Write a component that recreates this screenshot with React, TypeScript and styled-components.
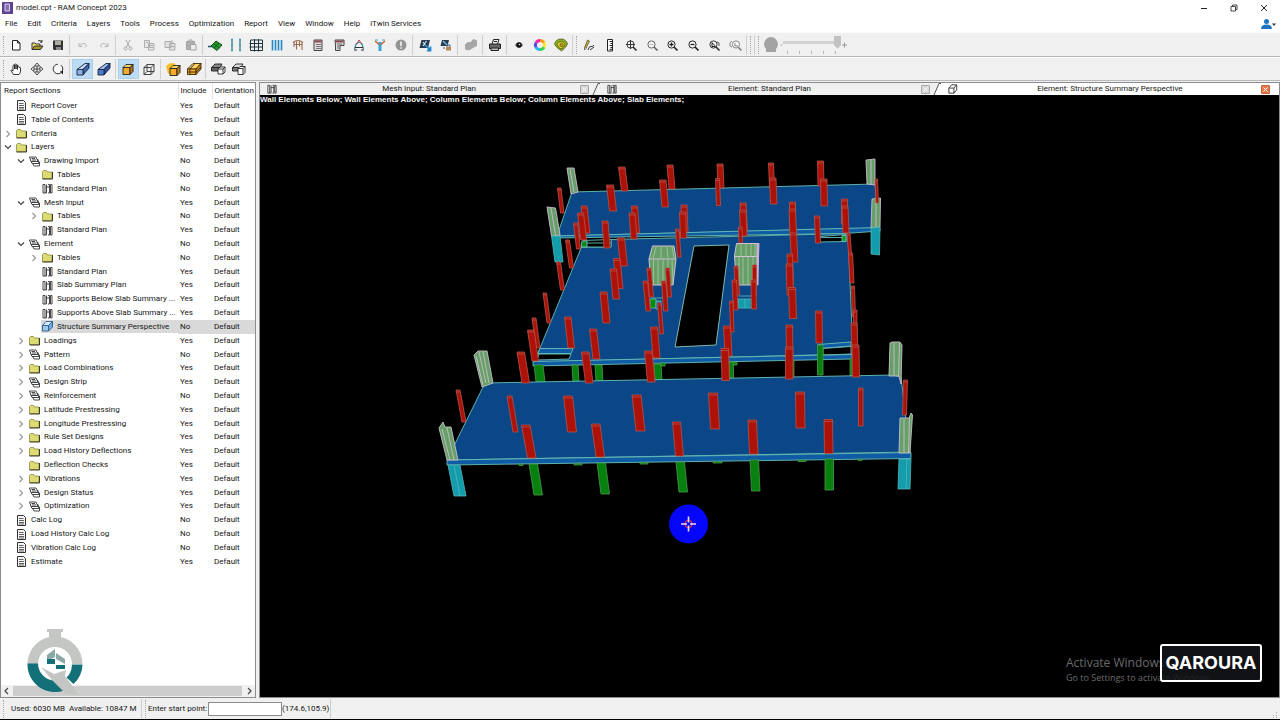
import React from "react";
import styled, { createGlobalStyle, css } from "styled-components";

const GlobalStyle = createGlobalStyle`
  * { box-sizing: border-box; }
  body {
    margin: 0;
    background: #000;
    color: #161616;
    font-family: Roboto, "Open Sans", sans-serif;
    font-size: 8px;
    line-height: 12px;
  }
  button, input { font: inherit; color: inherit; }
`;

const Page = styled.div`
  display: flex;
  flex-direction: column;
  min-height: 100vh;
  background: #f0f0f0;
  border-bottom: 1px solid #000;
`;

const TitleBar = styled.header`
  display: flex;
  align-items: center;
  height: 16px;
  padding: 0 6px 0 2px;
  gap: 3px;
  background: #fff;
`;

const Title = styled.h1`
  flex: 1;
  margin: 0;
  font-size: 8px;
  font-weight: 400;
`;

const WindowButton = styled.button`
  display: flex;
  justify-content: center;
  align-items: center;
  width: 20px;
  height: 14px;
  margin-left: 7px;
  padding: 0;
  border: 0;
  background: none;
`;

const MenuBar = styled.nav`
  display: flex;
  align-items: center;
  gap: 10px;
  height: 16px;
  padding: 0 4px 0 5px;
  background: #fff;
`;

const MenuItem = styled.button`
  padding: 0;
  border: 0;
  background: none;
  white-space: nowrap;
`;

const UserButton = styled(MenuItem)`
  display: flex;
  margin-left: auto;
`;

const Toolbar = styled.div<{ $height: number }>`
  display: flex;
  align-items: center;
  height: ${(p) => p.$height}px;
  padding-left: 2px;
  border-top: 1px solid #fafafa;
  border-bottom: 1px solid #b8b8b8;
`;

const ToolGroup = styled.div<{ $width: number }>`
  display: flex;
  width: ${(p) => p.$width}px;
`;

const ToolButton = styled.button<{ $active?: boolean }>`
  display: flex;
  flex: 1;
  justify-content: center;
  align-items: center;
  height: 20px;
  padding: 0;
  border: 0;
  background: none;
  ${(p) =>
    p.$active &&
    css`
      background: #bcdcf4;
      box-shadow: inset 0 0 0 1px #a9d0ee;
    `}
`;

const Separator = styled.span`
  width: 4px;
  height: 20px;
  border-right: 2px solid #f0f0f0;
  background: linear-gradient(#cfcfcf, #cfcfcf) right / 1px 100% no-repeat;
`;

const Grip = styled.span`
  width: 2px;
  height: 18px;
  margin: 0 1px;
  border-left: 1px dotted #a8a8a8;
`;

const Slider = styled.input`
  appearance: none;
  width: 58px;
  height: 18px;
  margin: 0;
  background:
    linear-gradient(#d2d2d2, #d2d2d2) 0 5px / 100% 3px no-repeat,
    repeating-linear-gradient(90deg, transparent 0 4px, #b5b5b5 4px 5px, transparent 5px 12px) 0 15px / 100% 3px no-repeat;
  &::-webkit-slider-thumb {
    appearance: none;
    width: 7px;
    height: 13px;
    margin-top: -5px;
    background: #c2c2c2;
    clip-path: polygon(0 0, 100% 0, 100% 75%, 50% 100%, 0 75%);
  }
`;

const Main = styled.main`
  display: flex;
  flex: 1;
  padding-top: 1px;
`;

const Sidebar = styled.aside`
  position: relative;
  display: flex;
  flex-direction: column;
  width: 256px;
  flex: none;
  border: 1px solid #8a8c92;
  background: #fff;
`;

const TreeTable = styled.table`
  width: 100%;
  height: 486px;
  table-layout: fixed;
  border-collapse: collapse;
  th, td {
    padding: 0;
    text-align: left;
    font-weight: 400;
    white-space: nowrap;
  }
  thead tr { height: 16px; }
  th:first-child { padding-left: 3px; }
  th + th { border-left: 1px solid #e4e4e4; }
  th + th, td + td { padding-left: 2px; }
`;

const TreeRow = styled.tr<{ $selected?: boolean }>`
  ${(p) =>
    p.$selected &&
    css`
      td + td, td span { background: #d9d9d9; }
    `}
`;

const TreeCell = styled.div<{ $level: number }>`
  display: flex;
  align-items: center;
  height: 13px;
  padding-left: ${(p) => p.$level * 13}px;
`;

const Chevron = styled.button`
  display: flex;
  justify-content: center;
  align-items: center;
  flex: none;
  width: 13px;
  height: 12px;
  padding: 0;
  border: 0;
  background: none;
`;

const TreeLabel = styled.span`
  display: flex;
  align-items: center;
  flex: 1;
  gap: 3px;
  height: 13px;
  margin-left: 1px;
`;

const HScroll = styled.div`
  display: flex;
  align-items: center;
  height: 12px;
  margin-top: auto;
  background: #f0f0f0;
`;

const ScrollArrow = styled(Chevron)`
  width: 12px;
`;

const ScrollThumb = styled.div`
  flex: 1;
  height: 10px;
  margin-right: 1px;
  background: #cdcdcd;
`;

const BrandMark = styled.svg`
  position: absolute;
  left: 24px;
  bottom: 1px;
`;

const Workspace = styled.section`
  display: flex;
  flex: 1;
  flex-direction: column;
  min-width: 0;
  margin-left: 3px;
  border: 1px solid #8a8c92;
`;

const Tabs = styled.div`
  display: flex;
  height: 12px;
  background: #f0f0f0;
`;

const Tab = styled.div<{ $active?: boolean }>`
  display: flex;
  align-items: center;
  flex: ${(p) => (p.$active ? "1" : "0 0 33.4%")};
  height: 12px;
  padding-left: 6px;
  background: ${(p) => (p.$active ? "#fff" : "#f0f0f0")};
`;

const TabTitle = styled.button`
  display: flex;
  align-items: center;
  flex: 1;
  height: 12px;
  padding: 0;
  border: 0;
  background: none;
`;

const TabText = styled.span`
  flex: 1;
  text-align: center;
`;

const TabClose = styled.button<{ $active?: boolean }>`
  display: flex;
  justify-content: center;
  align-items: center;
  width: 9px;
  height: 9px;
  margin-right: ${(p) => (p.$active ? 9 : 1)}px;
  padding: 0;
  border: 1px solid ${(p) => (p.$active ? "#c8643c" : "#a8a8a8")};
  border-radius: 1px;
  background: ${(p) => (p.$active ? "#e87a4a" : "#d8d8d8")};
`;

const Canvas = styled.div`
  position: relative;
  flex: 1;
  background: #000;
  color: #f4f4f4;
`;

const VisibleItems = styled.p`
  height: 9px;
  margin: 0;
  font: 700 8px/9px "Liberation Sans", Arial, sans-serif;
`;

const Scene = styled.svg`
  display: block;
  width: 100%;
`;

const Watermark = styled.div`
  position: absolute;
  right: 53px;
  bottom: 12px;
  width: 160px;
  color: #6c6c6c;
  font: 9px/14px "Open Sans", sans-serif;
  white-space: nowrap;
  strong {
    display: block;
    font-size: 12px;
    font-weight: 400;
    line-height: 17px;
  }
`;

const Badge = styled.div`
  position: absolute;
  right: 17px;
  bottom: 15px;
  display: flex;
  justify-content: center;
  align-items: center;
  width: 102px;
  height: 38px;
  border: 2px solid #fff;
  border-radius: 3px;
  background: rgba(20, 21, 25, 0.86);
  color: #fff;
  font: 700 18px/20px Inter, sans-serif;
`;

const StatusBar = styled.footer`
  display: flex;
  align-items: center;
  height: 21px;
  padding: 0 1px 0 2px;
  white-space: pre;
`;

const StatusText = styled.span<{ $width?: number }>`
  width: ${(p) => (p.$width ? p.$width + "px" : "auto")};
  padding-left: 5px;
`;

const StatusLabel = styled.label`
  display: flex;
  align-items: center;
  gap: 1px;
`;

const PointInput = styled.input`
  width: 74px;
  height: 14px;
  padding: 0 2px;
  border: 1px solid #8c8c8c;
  background: #fff;
`;

const ResizeGrip = styled.svg`
  align-self: flex-end;
  margin-left: auto;
`;

/* ---------- toolbar icons, drawn on a 16 unit grid ---------- */

const lens = (color: string) => (
  <g fill="none" stroke={color}>
    <circle cx="7.5" cy="7.5" r="3.6" fill="#f8f8f8" />
    <path d="M10 10l3.500 3.500" strokeWidth="1.700" />
  </g>
);
const box3d = (front: string, side: string, top: string) => (
  <g stroke="#222" strokeWidth=".9" strokeLinejoin="round">
    <path d="M3 6.500h7v7H3z" fill={front} />
    <path d="M3 6.500L6 3.500h7l-3 3z" fill={top} />
    <path d="M10 6.500L13 3.500v7l-3 3z" fill={side} />
  </g>
);
const beam = (front: string, side: string, top: string) => (
  <g stroke="#14213c" strokeWidth=".9" strokeLinejoin="round">
    <path d="M2 8.500L10 2.500h4l-6 6z" fill={top} />
    <path d="M8 8.500l6-6v4.500l-6 7z" fill={side} />
    <path d="M2 8.500h6V14H2z" fill={front} />
  </g>
);

const icons: Record<string, React.ReactNode> = {
  new: <path d="M4.500 3.500h5l2.500 2.500v7h-7.500zM9.500 3.500V6H12" fill="#fff" stroke="#222" />,
  open: (
    <g stroke="#222" strokeWidth=".9">
      <path d="M3 12V6h3l1 1h4v2" fill="#f4e27a" />
      <path d="M3 12.500L5.500 9H14l-2.500 3.500z" fill="#a8962e" />
      <path d="M9 4q2-1.500 4 .8M13 3v2.200h-2" fill="none" />
    </g>
  ),
  save: (
    <g>
      <path d="M3 3.500h10v9.500H4L3 12z" fill="#333" />
      <path d="M5 4h6v4H5z" fill="#a9ada0" />
      <path d="M6 10h5v3H6z" fill="#8a8a8a" />
    </g>
  ),
  undo: <path d="M4 6v3.500h3.500M4.500 9Q8 5 11 7.500q1 2-1 3" fill="none" stroke="#b4b4b4" />,
  redo: <path d="M12 6v3.500H8.500M11.500 9Q8 5 5 7.500q-1 2 1 3" fill="none" stroke="#b4b4b4" />,
  cut: (
    <g fill="none" stroke="#a9a9a9">
      <path d="M6 3l3.500 7M10 3L6.500 10" />
      <circle cx="5.500" cy="11.500" r="1.500" />
      <circle cx="10.500" cy="11.500" r="1.500" />
    </g>
  ),
  copy: (
    <g fill="#e8e8e8" stroke="#adadad">
      <path d="M3.500 3.500h5v7h-5zM7.500 6.500h5.500v6.500H7.500z" />
      <path d="M9 8.500h3M9 10.500h3M5 5.500h2" />
    </g>
  ),
  copyTo: (
    <g fill="#e0e0e0" stroke="#adadad">
      <path d="M3 4.500h6v6H3zM7.500 6.500H13v6.500H7.500z" />
      <path d="M10 3v4M8.500 5.500L10 7l1.500-1.500M9 9.500h3" />
    </g>
  ),
  paste: (
    <g stroke="#a2a2a2">
      <path d="M3.500 4.500h8v8h-8z" fill="#b0b0b0" />
      <path d="M6 3h3v2H6z" fill="#ddd" />
      <path d="M7.500 7.500h5.500v5.500H7.500z" fill="#eee" />
    </g>
  ),
  mesh: (
    <g>
      <path d="M1 9.500h6" stroke="#174e78" strokeWidth="1.500" />
      <path d="M4 9l5-5 6 4-5 5.500z" fill="#24962c" stroke="#0d5417" />
      <path d="M6.500 6.500l6 4.500M11.500 6L7 11" stroke="#0d5417" strokeWidth=".8" />
    </g>
  ),
  strips: (
    <g>
      <path d="M4 3v10.500M12 3v10.500" stroke="#2b6f7d" strokeWidth="1.200" />
      <path d="M3 2.500h2M3 8h2M3 13.500h2M11 2.500h2M11 8h2M11 13.500h2" stroke="#37a0ab" strokeWidth="1.500" />
    </g>
  ),
  grid: <path d="M2.500 3h12v10.500h-12zM6.500 2v12.500M10.500 2v12.500M1.500 6.500h13.500M1.500 10h13.500" fill="none" stroke="#1d3540" />,
  bars: <path d="M3.500 3v10.500M6.500 3v10.500M9.500 3v10.500M12.500 3v10.500" stroke="#2388c4" strokeWidth="1.600" />,
  frame: <path d="M3 5.500q5-4 10 0M4 5v5M6.500 4.500v8M9.500 4.500v5M12 5v8M4 7.500h8" fill="none" stroke="#9a6b4c" strokeWidth="1.100" />,
  calc: (
    <g>
      <path d="M4 3h8v10.500H4z" fill="#ddd" stroke="#444" />
      <path d="M4.500 3.500h7v2h-7z" fill="#8f4a52" />
      <path d="M6 7.500h5M6 9.500h5M6 11.500h5" stroke="#777" />
    </g>
  ),
  sheet: (
    <g>
      <path d="M4 3h9v5.500H9v5H4.500V8z" fill="#ddd" stroke="#444" />
      <path d="M4.500 3.500h8v2h-8z" fill="#8f4a52" />
      <path d="M6 7h5M6 9h2.500M6 11h2.500" stroke="#666" />
    </g>
  ),
  arch: (
    <g fill="none">
      <path d="M3.500 12l1.500-5q3.500-3 6 0l1.500 5" stroke="#3887ab" strokeWidth="1.200" />
      <path d="M8 3L5.500 7.500M8 3l3 4.500" stroke="#b34646" />
      <path d="M3 13h3M10 13h3M4 10.500h8" stroke="#333" />
    </g>
  ),
  tee: (
    <g fill="none">
      <path d="M8 5v9" stroke="#35a5d5" strokeWidth="3" />
      <path d="M3 4l4 3.500M13 4L9 7.500" stroke="#cf5730" strokeWidth="1.300" />
      <path d="M3 3h3M10 3h3" stroke="#48a4cf" />
    </g>
  ),
  info: (
    <g>
      <circle cx="8" cy="8" r="5.500" fill="#949494" />
      <path d="M8 4.500v4.500M8 10.300v1.500" stroke="#eee" strokeWidth="1.700" />
    </g>
  ),
  sync: (
    <g>
      <path d="M4.500 3h8.500l-2 8H2.500z" fill="#273b4e" />
      <path d="M6 5l3 4M9.500 4L6 9" stroke="#d6e8f2" strokeWidth="1.200" />
      <path d="M8 8l5.500 5M13.500 9.500V13.500H10" fill="none" stroke="#2487c7" strokeWidth="1.800" />
    </g>
  ),
  syncLock: (
    <g>
      <path d="M4 3h7l-1.500 6H2.500z" fill="#273b4e" />
      <path d="M5 4l4 4" stroke="#7ebde5" strokeWidth="1.300" />
      <path d="M8 9.500h5v4H8z" fill="#bd8659" />
      <path d="M9 9.500V8h3v1.500M5 11h2" fill="none" stroke="#315e82" />
    </g>
  ),
  solids: <path d="M2 7.500l3-2.500h3l1-2 2-1 3 1.500v5.500l-4 2-4 2.500-4-1z" fill="#a6a6a6" />,
  print: (
    <g stroke="#222">
      <path d="M5 7l1.500-4.500H12L10.500 7" fill="#eee" />
      <path d="M2.500 7h11v4.500h-11z" fill="#666" />
      <path d="M4 11h7.500v2.500H4zM7 4.500h3" fill="#bbb" />
    </g>
  ),
  eye: (
    <g>
      <path d="M3.500 8q4.500-5.500 9 0-4.500 5.500-9 0z" fill="#999" />
      <circle cx="8" cy="8" r="2.800" fill="#111" />
      <circle cx="8.500" cy="7.500" r=".8" fill="#eee" />
    </g>
  ),
  wheel: (
    <g fill="none" strokeWidth="3">
      <path d="M8 3.400A4.600 4.600 0 0 1 12 5.700" stroke="#ff9c12" />
      <path d="M12 5.700A4.600 4.600 0 0 1 12 10.300" stroke="#ffe526" />
      <path d="M12 10.300A4.600 4.600 0 0 1 8 12.600" stroke="#3bd452" />
      <path d="M8 12.600A4.600 4.600 0 0 1 4 10.300" stroke="#22b9ec" />
      <path d="M4 10.300A4.600 4.600 0 0 1 4 5.700" stroke="#4b47ee" />
      <path d="M4 5.700A4.600 4.600 0 0 1 8 3.400" stroke="#f024a8" />
    </g>
  ),
  contour: (
    <g stroke="#4c5a12" strokeWidth=".8">
      <path d="M1.500 7q1.500-5 6.500-5t6.500 5q-1 3-6 7-6-4-7-7z" fill="#8fae2c" />
      <path d="M4 7.500Q5 4.500 8 4.500t4 3q-1 3-4 4.500-3-2-4-4.500z" fill="#e6d32c" />
      <circle cx="8.500" cy="8" r="1.600" fill="#d69121" />
    </g>
  ),
  pencil: (
    <g>
      <path d="M4 11L7.500 3.500" stroke="#c7b42d" strokeWidth="2" />
      <path d="M6.500 3L3.500 11v2l1.500-1.500L8.500 4z" fill="none" stroke="#444" strokeWidth=".7" />
      <path d="M7 13q1-4 3-3.500t3-1.500M9 13l4-3" fill="none" stroke="#333" />
    </g>
  ),
  ruler: (
    <g>
      <path d="M5.500 2.500h5v11.500h-5z" fill="#fff" stroke="#222" />
      <path d="M7.500 4.500H10M8.500 6.500H10M7.500 8.500H10M8.500 10.500H10M7.500 12.300H10" stroke="#222" />
    </g>
  ),
  zoomExtents: <g>{lens("#333")}<path d="M3 7.500h9M7.500 3v9" stroke="#333" /></g>,
  zoomWindow: <g>{lens("#666")}<path d="M5.500 7.500h4" stroke="#bbb" /></g>,
  zoomIn: <g>{lens("#222")}<path d="M5.500 7.500h4M7.500 5.500v4" stroke="#222" strokeWidth="1.300" /></g>,
  zoomOut: <g>{lens("#222")}<path d="M5.500 7.500h4" stroke="#222" strokeWidth="1.300" /></g>,
  zoomPrev: <g>{lens("#333")}<path d="M6 5.500v4h3.500M9.500 9L6 6" stroke="#222" fill="none" /><path d="M11 5q3 0 2 4" stroke="#555" fill="none" /></g>,
  zoomNext: <g><circle cx="9" cy="7.500" r="3.600" fill="#f8f8f8" stroke="#888" /><path d="M11.500 10.500l3 3" stroke="#777" strokeWidth="1.500" /><path d="M5 4Q2 5 3 9l2 1M8 6v3h3" fill="none" stroke="#888" /></g>,
  hand: <path d="M5.500 13.500L3 9.500q0-1.500 2 .500V4.500q1-1 1.500 0V8 3.500q1-1 1.500 0V8 4q1-1 1.500 0v4.500-3q1-.8 1.500 0V6.500q1.500-.5 1.500.5v3q0 2-1.500 3.500z" fill="#fff" stroke="#222" strokeWidth=".9" />,
  pan: (
    <g fill="#fff" stroke="#333" strokeWidth=".9">
      <path d="M8 2l2.500 3H5.500zM8 14l2.500-3H5.500zM2 8l3-2.500v5zM14 8l-3-2.500v5z" />
      <path d="M8 5v6M5 8h6" />
    </g>
  ),
  rotate: <g><circle cx="8" cy="8" r="4.800" fill="#f8f8f8" stroke="#333" strokeDasharray="22 3" /><path d="M10 10.500l3 3v-4z" fill="#222" /></g>,
  beam: beam("#8fb0e4", "#3f66b0", "#c3d6f2"),
  beam2: beam("#4d7ccf", "#2b4f9c", "#9dbbea"),
  boxSolid: box3d("#f5aa2c", "#b8761a", "#ffd27a"),
  boxWire: (
    <g fill="none" stroke="#333" strokeWidth=".9">
      <path d="M3 6.500h7v7H3zM6 3.500h7v7H6zM3 6.500L6 3.500M10 6.500L13 3.500M10 13.500l3-3M3 13.500L6 10.500" />
    </g>
  ),
  boxGlow: <g><path d="M1 5l4-3 5 .5 1 3-4 7H3z" fill="#f6bd28" /><g transform="translate(2 1)">{box3d("#f5aa2c", "#c98316", "#ffd36a")}</g></g>,
  boxCut: (
    <g stroke="#3a2a08" strokeWidth=".9">
      <path d="M1.500 8L7 2.500h8L10 8z" fill="#ffd36a" />
      <path d="M1.500 8H10v5.500H1.500z" fill="#f5aa2c" />
      <path d="M10 8l5-5.500V8l-5 5.500z" fill="#c98316" />
      <path d="M4 13.500V8L9 2.500M1.500 11H10l5-5" fill="none" />
    </g>
  ),
  printBox: (
    <g stroke="#222" strokeWidth=".9">
      <path d="M1.500 6.500L5 3h7l-2 3.500z" fill="#888" />
      <path d="M1.500 6.500H10V10H1.500z" fill="#666" />
      <path d="M8 8h5v5H8zM8 8l2-2h5l-2 2M13 13l2-2V6" fill="#fff" />
    </g>
  ),
  printBox2: (
    <g stroke="#222" strokeWidth=".9">
      <path d="M1.500 6.500L5 3h7l-2 3.500z" fill="#ddd" />
      <path d="M1.500 6.500H10V10H1.500z" fill="#777" />
      <path d="M7 7.500h5v6H7zM7 7.500l2-2h5l-2 2M12 13.500l2-2v-6" fill="#fff" />
    </g>
  ),
};

const Glyph = ({ name }: { name: string }) => (
  <svg width="16" height="16" viewBox="0 0 16 16" aria-hidden="true">
    {icons[name]}
  </svg>
);

type Tool = [icon: string, label: string, active?: boolean];
type Group = { width: number; tools: Tool[] };

const mainGroups: Group[] = [
  { width: 62, tools: [["new", "New"], ["open", "Open"], ["save", "Save"]] },
  { width: 42, tools: [["undo", "Undo"], ["redo", "Redo"]] },
  { width: 83, tools: [["cut", "Cut"], ["copy", "Copy"], ["copyTo", "Copy to"], ["paste", "Paste"]] },
  {
    width: 206,
    tools: [
      ["mesh", "Generate mesh"], ["strips", "Generate strips"], ["grid", "Grid"], ["bars", "Reinforcement"], ["frame", "Tendons"],
      ["calc", "Calc all"], ["sheet", "Report"], ["arch", "Load balance"], ["tee", "Punch check"], ["info", "Errors"],
    ],
  },
  { width: 41, tools: [["sync", "Sync"], ["syncLock", "Sync lock"]] },
  { width: 21, tools: [["solids", "Solids"]] },
  { width: 20, tools: [["print", "Print"]] },
  { width: 62, tools: [["eye", "Visible objects"], ["wheel", "Colors"], ["contour", "Contours"]] },
];

const zoomGroup: Group = {
  width: 166,
  tools: [
    ["pencil", "Redraw"], ["ruler", "Scale"], ["zoomExtents", "Zoom extents"], ["zoomWindow", "Zoom window"],
    ["zoomIn", "Zoom in"], ["zoomOut", "Zoom out"], ["zoomPrev", "Previous zoom"], ["zoomNext", "Next zoom"],
  ],
};

const viewGroups: Group[] = [
  { width: 62, tools: [["hand", "Pan"], ["pan", "Move"], ["rotate", "Rotate"]] },
  { width: 42, tools: [["beam", "Perspective", true], ["beam2", "Parallel"]] },
  { width: 41, tools: [["boxSolid", "Solid", true], ["boxWire", "Wireframe"]] },
  { width: 41, tools: [["boxGlow", "Shaded"], ["boxCut", "Outlined"]] },
  { width: 41, tools: [["printBox", "Set print view"], ["printBox2", "Show print view"]] },
];

const Tools = ({ group }: { group: Group }) => (
  <ToolGroup $width={group.width}>
    {group.tools.map(([icon, label, active]) => (
      <ToolButton key={icon} $active={active} aria-label={label}>
        <Glyph name={icon} />
      </ToolButton>
    ))}
  </ToolGroup>
);

const Groups = ({ groups }: { groups: Group[] }) => (
  <>
    {groups.map((g, i) => (
      <React.Fragment key={i}>
        {i > 0 && <Separator />}
        <Tools group={g} />
      </React.Fragment>
    ))}
  </>
);

/* ---------- report tree ---------- */

const treeIcons: Record<string, React.ReactNode> = {
  doc: (
    <g>
      <path d="M2.500 1.500h6l2 2v8h-8z" fill="#f4f4f4" stroke="#333" />
      <path d="M4 4.500h4.500M4 6.500h5M4 8.500h5M4 10h5" stroke="#555" strokeWidth=".9" />
    </g>
  ),
  folder: (
    <g>
      <path d="M1.500 10.500v-7l1-1h3l1 1.500h4.500v6.500z" fill="#dddc74" stroke="#8b8840" strokeWidth=".8" />
      <path d="M1.500 11h10V4" fill="none" stroke="#3c3b20" />
    </g>
  ),
  layers: (
    <g fill="#fff" stroke="#333" strokeWidth=".9">
      <path d="M4 7h7.500v4H6z" />
      <path d="M2.500 4.500H10l1 4H4z" />
      <path d="M1.500 2H8l2 4.500H3z" />
      <path d="M3.500 3.500H7M4 5h4" />
    </g>
  ),
  plan: (
    <g fill="none" stroke="#333" strokeWidth=".9">
      <path d="M2 2.500h2v8.500H2zM5.500 2.500v8.500h-1.500M7 2.500h1.500V11H7M9.500 2.500h1.500V11H9.500zM5.500 5h3.500" />
    </g>
  ),
  cube: (
    <g stroke="#2a5d8c" strokeWidth=".9" strokeLinejoin="round">
      <path d="M1.500 5.500h6v5.500h-6z" fill="#9cc8ee" />
      <path d="M1.500 5.500L5 1.500h6.500l-4 4z" fill="#d6eafa" />
      <path d="M7.500 5.500l4-4V7l-4 4z" fill="#6fa9de" />
    </g>
  ),
};

type Row = [label: string, level: number, icon: string, state: "" | ">" | "v", include: "Yes" | "No"];

const rows: Row[] = [
  ["Report Cover", 0, "doc", "", "Yes"],
  ["Table of Contents", 0, "doc", "", "Yes"],
  ["Criteria", 0, "folder", ">", "Yes"],
  ["Layers", 0, "folder", "v", "Yes"],
  ["Drawing Import", 1, "layers", "v", "No"],
  ["Tables", 2, "folder", "", "No"],
  ["Standard Plan", 2, "plan", "", "No"],
  ["Mesh Input", 1, "layers", "v", "Yes"],
  ["Tables", 2, "folder", ">", "No"],
  ["Standard Plan", 2, "plan", "", "Yes"],
  ["Element", 1, "layers", "v", "No"],
  ["Tables", 2, "folder", ">", "No"],
  ["Standard Plan", 2, "plan", "", "Yes"],
  ["Slab Summary Plan", 2, "plan", "", "Yes"],
  ["Supports Below Slab Summary ...", 2, "plan", "", "Yes"],
  ["Supports Above Slab Summary ...", 2, "plan", "", "Yes"],
  ["Structure Summary Perspective", 2, "cube", "", "No"],
  ["Loadings", 1, "folder", ">", "Yes"],
  ["Pattern", 1, "layers", ">", "No"],
  ["Load Combinations", 1, "folder", ">", "Yes"],
  ["Design Strip", 1, "layers", ">", "Yes"],
  ["Reinforcement", 1, "layers", ">", "No"],
  ["Latitude Prestressing", 1, "folder", ">", "Yes"],
  ["Longitude Prestressing", 1, "folder", ">", "Yes"],
  ["Rule Set Designs", 1, "folder", ">", "Yes"],
  ["Load History Deflections", 1, "folder", ">", "Yes"],
  ["Deflection Checks", 1, "folder", "", "Yes"],
  ["Vibrations", 1, "folder", ">", "Yes"],
  ["Design Status", 1, "layers", ">", "Yes"],
  ["Optimization", 1, "layers", ">", "Yes"],
  ["Calc Log", 0, "doc", "", "No"],
  ["Load History Calc Log", 0, "doc", "", "No"],
  ["Vibration Calc Log", 0, "doc", "", "No"],
  ["Estimate", 0, "doc", "", "Yes"],
];

const Arrow = ({ d, color = "#444" }: { d: string; color?: string }) => (
  <svg width="8" height="8" viewBox="0 0 8 8" aria-hidden="true">
    <path d={d} fill="none" stroke={color} strokeWidth="1.200" />
  </svg>
);

const TreeIcon = ({ name }: { name: string }) => (
  <svg width="13" height="13" viewBox="0 0 13 13" aria-hidden="true">
    {treeIcons[name]}
  </svg>
);

const ReportTree = () => (
  <TreeTable>
    <colgroup>
      <col />
      <col width="34" />
      <col width="43" />
    </colgroup>
    <thead>
      <tr>
        <th>Report Sections</th>
        <th>Include</th>
        <th>Orientation</th>
      </tr>
    </thead>
    <tbody>
      {rows.map(([label, level, icon, state, include], i) => (
        <TreeRow key={i} $selected={icon === "cube"}>
          <td>
            <TreeCell $level={level}>
              <Chevron as={state ? "button" : "i"} aria-label={state ? "Toggle " + label : undefined}>
                {state === ">" && <Arrow d="M2.500 1l3 3-3 3" color="#999" />}
                {state === "v" && <Arrow d="M1 2.500l3 3 3-3" />}
              </Chevron>
              <TreeLabel>
                <TreeIcon name={icon} />
                {label}
              </TreeLabel>
            </TreeCell>
          </td>
          <td>{include}</td>
          <td>Default</td>
        </TreeRow>
      ))}
    </tbody>
  </TreeTable>
);

/* ---------- structure model ---------- */

/* x, y of the top left corner, width, lean to the right, height */
type Post = [number, number, number, number, number];

const post = ([x, y, w, dx, h]: Post) => `M${x} ${y}h${w}L${x + w + dx} ${y + h}h${-w}z`;
const caps = ([x, y, w]: Post) => `M${x} ${y + 2}h${w}`;

const backPosts: Post[] = [
  [618.5, 167, 6.5, 3, 24], [667, 165, 6, 2, 24], [717, 164, 6, 1, 24], [768.500, 163, 5, 1, 25], [817.500, 161, 6, 0.5, 25],
  [606.5, 185, 7, 3, 26], [659.5, 180, 6.5, 2.5, 27], [715.5, 178.5, 4, 1, 27], [769.5, 178, 6.5, 1, 26], [820.5, 179, 6.5, 0.5, 27],
  [557.5, 188, 3.5, 3, 25], [875, 179, 2.5, 1, 24], [581, 206, 6, 3, 27], [577.5, 213, 6, 3, 27], [602, 221, 6, 2, 27],
  [631.5, 206, 6, 2, 27], [629, 213, 6, 2, 26], [681, 205, 6, 1, 27], [679.5, 212, 6, 1, 26], [675.5, 229, 3.5, 2, 28],
  [573.5, 223, 4, 3, 26], [740, 203, 6, 1.5, 27], [739.5, 210, 6.5, 1, 26], [738.5, 227, 3.5, 1, 28],
  [789.5, 202, 6, 0, 26], [789, 209, 6.5, 1, 26], [814.5, 216, 5, 1, 27], [841.5, 199, 6, 0, 25], [842, 206, 6, 1, 27],
];
const midPosts: Post[] = [
  [565.5, 240, 4, 4, 28], [556.500, 262, 4, 4, 28], [617.5, 238, 7, 3, 28], [613.5, 258.5, 6.5, 3, 30], [610, 269, 6.5, 3, 30],
  [543, 293, 3.5, 4, 30], [532, 318, 4, 4, 30], [527.5, 330, 6.5, 4.5, 31], [564.5, 317, 6.5, 3.5, 31], [600, 292, 7, 3, 31],
  [589.5, 329, 7, 3.5, 30], [657.5, 303, 3.5, 2.5, 31], [650.5, 327, 7, 2.5, 31], [647, 268, 4, 2.5, 29], [643, 281, 4.5, 3, 30],
  [665.5, 268, 4, 2, 29], [661.5, 281, 4.5, 2, 30], [790, 233, 6.5, 1.5, 29], [787, 254, 5.5, 1, 30], [786, 264, 6.5, 1, 31],
  [788.5, 287.5, 7, 1, 31], [847, 233, 3, 2, 28], [848.5, 253, 4, 1.5, 30], [851.5, 286, 3, 1, 31], [853.5, 310, 3.5, 0, 31],
  [851, 323, 6, 1, 31], [734, 266, 4, 1.5, 29], [732, 280, 4.5, 1.5, 30], [752.5, 265, 4, 0, 30], [751, 280, 5, 0.5, 29],
  [729.5, 301, 3.5, 1, 31], [723.5, 326, 7, 1.5, 30], [815.5, 311, 6.5, 0.5, 32], [786, 325, 6.5, 0.5, 31],
];
const frontPosts: Post[] = [
  [517, 352, 7.5, 5, 31], [581.5, 352, 7.5, 4, 31], [644.5, 351, 7.5, 3, 31], [721, 348.5, 7.5, 1, 32], [785.5, 347, 7.5, 0, 32],
  [852, 345, 7, 0.5, 32], [456, 390, 4, 6, 32], [507, 396, 5, 6, 36], [563.5, 396, 9, 4, 36], [632, 395, 9, 4, 36],
  [521.5, 425, 8.5, 6, 33], [591.5, 424, 8.5, 4.5, 33], [672.5, 422, 8, 3, 34], [708.5, 393, 9, 2, 36], [795.5, 392, 9, 0.5, 36],
  [748, 420, 8.5, 1.5, 34], [824, 419.5, 8.5, 0.5, 34], [858.5, 388, 4.5, 0, 38], [903.5, 380, 4, -1, 35],
];
const midSupports: Post[] = [
  [534, 365, 9, 2, 17], [572, 365, 6, 1, 17], [595, 365, 7, 1, 17], [654, 364, 7, 1, 17], [661, 363, 4, 0, 3],
  [729.5, 362, 4, 0, 17], [733, 362, 4, 0, 3], [817.5, 345, 5.5, 0, 30], [792, 360, 2, 0, 18], [850, 358, 2, 0, 18],
];
const frontSupports: Post[] = [
  [529, 464, 8.5, 5, 31], [597, 463, 8.5, 4, 31], [676, 462, 8.5, 3, 30], [750, 460, 8.5, 1.5, 31], [825, 459, 8.5, 0, 31],
  [519, 464, 4, 0, 1.5], [574, 463.5, 8, 0, 1.5], [640, 462.5, 8, 0, 1.5], [713, 461.5, 9, 0, 1.5], [798, 460, 8, 0, 1.5], [858, 459, 4, 0, 1.5],
];

const Posts = ({ items, fill, stroke }: { items: Post[]; fill: string; stroke: string }) => (
  <g fill={fill} stroke={stroke} strokeWidth=".8">
    {items.map((p, i) => (
      <path key={i} d={post(p)} />
    ))}
  </g>
);

const RedPosts = ({ items }: { items: Post[] }) => (
  <g>
    {items.map((p, i) => (
      <g key={i} stroke="#b5544c" strokeWidth=".8">
        <path d={post(p)} fill="#ac1208" />
        <path d={caps(p)} />
      </g>
    ))}
  </g>
);

const slab = "#0b4686";
const slabEdge = "#0f5ba4";
const outline = "#69bfb6";

const StructureModel = () => (
  <Scene viewBox="260 104 1019 593" role="img" aria-label="Structure summary perspective">
    <g stroke={outline} strokeWidth=".9" strokeLinejoin="round">
      {/* back slab */}
      <path d="M572 192L875 184L878 228L557 236z" fill={slab} />
      <path d="M557 236L880 227.500V231L845 233.500L557 238z" fill={slabEdge} />
      {/* middle slab */}
      <path d="M611 239.500L848 233.500L853 354L533 362L540 348L581.500 247H611z" fill={slab} />
      <path d="M583 240.500L611 239.500V247H581.500z" fill="#000" />
      <path d="M583 243H611" />
      <path d="M582 241h5v6h-6z" fill="#0c8a1c" />
      <path d="M820 236.500L846 234.500V241.500L820 242z" fill="#000" />
      <path d="M820 237.500h24" />
      <path d="M842 235.500h4v6h-4z" fill="#0c9a1c" />
      <path d="M694 246L729 245L716 345L675 347z" fill="#000" stroke="#8ec9b4" />
      <path d="M540 348.500H573L571 353.500H538z" fill={slabEdge} />
      <path d="M539 354H571L569 359L537 360z" fill="#000" />
      <path d="M818 344.500L851 342V346L819 348.500z" fill={slabEdge} />
      <path d="M823 348.500L851 346.500V354L823 355z" fill="#000" />
      <path d="M533 361.500L852 354.500V359L533 366z" fill={slabEdge} />
    </g>

    <Posts items={midSupports} fill="#078010" stroke="#4a9a4a" />

    {/* back walls */}
    <g fill="#669f68" stroke="#cdb9d2" strokeWidth=".9">
      <path d="M567 168L574 168L578 192L571 194z" />
      <path d="M570 169l4 23" />
      <path d="M547 207L555.500 208L560 235L551.500 236z" />
      <path d="M551 208l4.500 27" />
      <path d="M866 160L875 159V185L867 184z" />
      <path d="M871 160v24" />
      <path d="M872 199L880.500 198L880 227L871 228z" />
      <path d="M876 199v28" />
    </g>
    <g fill="#139cab" stroke="#54b6b8" strokeWidth=".8">
      <path d="M551.500 236h8.500l3 26h-8z" />
      <path d="M871 228l9-1-.5 28-8.500-1z" />
      <path d="M738 299h14v9h-14z" />
      <path d="M745 299v9" />
    </g>

    <RedPosts items={backPosts} />

    {/* stair and lift cores */}
    <g fill="#669f68" stroke="#d3c1d8" strokeWidth="1">
      <path d="M652.500 246H674L676 259L673 285H651L649 259z" />
      <path d="M649 259H676" />
      <path d="M656 247L653 258M661 247v11M667 247l1 11M672 247l2 11M653.500 260v25M658 260v25M663 260v25M668 260v25M672 260l1 24" stroke="#b5cfae" strokeWidth=".7" />
      <path d="M736.500 243.500H759L757.500 285H736.500L734.500 256z" />
      <path d="M734.500 256.500H757" />
      <path d="M741 244v12M746 244v12M751 244v12M755 244v12M739 257v28M743 257v28M748 257v28M753 257v28" stroke="#b5cfae" strokeWidth=".7" />
      <path d="M757.500 244v41" stroke="#cfaed6" strokeWidth="2" />
    </g>
    <g stroke={outline} strokeWidth=".8">
      <path d="M651 298h12M651 301h10M739 296h13" />
      <path d="M650 299h6v9h-6z" fill="#078a12" />
      <path d="M656 302l5-1v8h-5z" fill={slabEdge} />
    </g>

    <RedPosts items={midPosts} />

    {/* front slab */}
    <g stroke={outline} strokeWidth=".9" strokeLinejoin="round">
      <path d="M485 383L893 375L901 377L910 452L447 460z" fill={slab} />
      <path d="M447 460L911 452.500V458.500L447 465z" fill={slabEdge} />
    </g>
    <Posts items={frontSupports} fill="#078010" stroke="#4a9a4a" />
    <RedPosts items={frontPosts} />
    <g fill="#669f68" stroke="#c9bfca" strokeWidth=".9">
      <path d="M474 355L478 351H487L493 383L482 387z" />
      <path d="M476 356l7 29M479 352l7 31M483 352l6 31" />
      <path d="M439 428L443 422L445 427H451L458 460H447z" />
      <path d="M442 429l8 31M447 428l7 32" />
      <path d="M890 343L892 342H900L902 345L901 384L899 376H889z" />
      <path d="M894 343v33M899.500 343l-1 33" />
      <path d="M900 418H909L911 413L912.500 415L910 453H899z" />
      <path d="M904 419v34M909.500 418l-1 35" />
    </g>
    <g fill="#139cab" stroke="#54b6b8" strokeWidth=".8">
      <path d="M448 465h12l6 31h-12z" />
      <path d="M454 465l6 31" />
      <path d="M899 459h12l-1 30h-12z" />
      <path d="M907 459l-1 30" />
    </g>

    {/* pointer */}
    <circle cx="688.500" cy="524" r="19.500" fill="#0505fa" />
    <g fill="none" strokeWidth="1.200">
      <circle cx="688.500" cy="524" r="3.500" stroke="#e0343c" />
      <path d="M681 524h6M690 524h6M688.500 516.500v6M688.500 525.500v6" stroke="#f2dce8" strokeWidth="1.600" />
    </g>
  </Scene>
);

const menus = ["File", "Edit", "Criteria", "Layers", "Tools", "Process", "Optimization", "Report", "View", "Window", "Help", "iTwin Services"];

const tabs = [
  { title: "Mesh Input: Standard Plan", icon: "plan" },
  { title: "Element: Standard Plan", icon: "plan" },
  { title: "Element: Structure Summary Perspective", icon: "wire", active: true },
];

const TabIcon = ({ name }: { name: string }) => (
  <svg width="12" height="12" viewBox="0 0 13 13" aria-hidden="true">
    {name === "plan" ? (
      treeIcons.plan
    ) : (
      <path d="M2 5.500h5.500V11H2zM2 5.500L5 2h5.500l-3 3.500M7.500 11l3-3.500V2" fill="#fff" stroke="#333" />
    )}
  </svg>
);

export default function App() {
  return (
    <Page>
      <GlobalStyle />
      <TitleBar>
        <svg width="11" height="12" viewBox="0 0 11 12" aria-hidden="true">
          <path d="M0 0h11v12H0z" fill="#5d4391" />
          <path d="M3 2h4.500v7H3z" fill="#8570b4" stroke="#d9d0ec" />
        </svg>
        <Title>model.cpt - RAM Concept 2023</Title>
        <WindowButton aria-label="Minimize">
          <svg width="8" height="8" viewBox="0 0 8 8"><path d="M1 4.500h6" stroke="#222" /></svg>
        </WindowButton>
        <WindowButton aria-label="Restore">
          <svg width="8" height="8" viewBox="0 0 8 8"><path d="M1 2.500h4.500V7H1zM2.500 2.500V1H7v4.500H5.500" fill="none" stroke="#333" strokeWidth=".9" /></svg>
        </WindowButton>
        <WindowButton aria-label="Close">
          <svg width="8" height="8" viewBox="0 0 8 8"><path d="M1 1l6 6M7 1L1 7" stroke="#222" /></svg>
        </WindowButton>
      </TitleBar>
      <MenuBar>
        {menus.map((m) => (
          <MenuItem key={m}>{m}</MenuItem>
        ))}
        <UserButton aria-label="Account">
          <svg width="16" height="12" viewBox="0 0 16 12">
            <circle cx="6.500" cy="3.500" r="2.500" fill="#1f74c4" />
            <path d="M1 11q0-4.500 5.500-4.500T12 11z" fill="#1f74c4" />
            <path d="M12 5.500h4L14 8z" fill="#333" />
          </svg>
        </UserButton>
      </MenuBar>
      <Toolbar $height={25}>
        <Grip />
        <Groups groups={mainGroups} />
        <Separator />
        <Grip />
        <Tools group={zoomGroup} />
        <Separator />
        <Grip />
        <Separator />
        <Grip />
        <svg width="22" height="18" viewBox="0 0 22 18" aria-hidden="true">
          <path d="M5 16v-3a7 7 0 1 1 10 0v3z" fill="#a3a3a3" />
          <path d="M19.500 9h2" stroke="#aaa" />
        </svg>
        <Slider type="range" aria-label="Perspective amount" min={0} max={100} defaultValue={100} />
        <svg width="8" height="18" viewBox="0 0 8 18" aria-hidden="true">
          <path d="M1 9h5M3.500 6.500v5" stroke="#999" />
        </svg>
      </Toolbar>
      <Toolbar $height={24}>
        <Grip />
        <Groups groups={viewGroups} />
      </Toolbar>
      <Main>
        <Sidebar>
          <ReportTree />
          <HScroll>
            <ScrollArrow aria-label="Scroll left"><Arrow d="M5 1L2 4l3 3" /></ScrollArrow>
            <ScrollThumb />
            <ScrollArrow aria-label="Scroll right"><Arrow d="M3 1l3 3-3 3" /></ScrollArrow>
          </HScroll>
          <BrandMark width="60" height="68" viewBox="25 628 60 68" aria-hidden="true">
            <path d="M47 629h16v3h-2v6H49v-6h-2z" fill="#c3c6c3" />
            <path d="M27.500 664a27.500 27.500 0 0 1 55 0H72a17 17 0 0 0-34 0z" fill="#c3c6c3" />
            <path d="M27.500 663.500H38a17 17 0 0 0 17 17l9 10a27.500 27.500 0 0 1-36.500-27z" fill="#147078" />
            <path d="M72 664.500h10.500a27 27 0 0 1-9 19.500l-7-6.500q5-4 5.500-13z" fill="#147078" />
            <path d="M41 667l13 7 12-4-1 6 14 19-13-1-14-14z" fill="#c3c6c3" />
            <path d="M47 655l8-6v8l-8 4z" fill="#8aa9a6" />
            <path d="M56 653l9 6v5l-9-5z" fill="#8aa9a6" />
            <path d="M47 659h8v5h-8zM56 665h9v4h-9z" fill="#147078" />
          </BrandMark>
        </Sidebar>
        <Workspace>
          <Tabs>
            {tabs.map((t) => (
              <Tab key={t.title} $active={t.active}>
                <TabTitle>
                  <TabIcon name={t.icon} />
                  <TabText>{t.title}</TabText>
                </TabTitle>
                <TabClose $active={t.active} aria-label={"Close " + t.title}>
                  <svg width="5" height="5" viewBox="0 0 5 5"><path d="M.5.5l4 4M4.500.5l-4 4" stroke="#fff" /></svg>
                </TabClose>
                {!t.active && (
                  <svg width="10" height="12" viewBox="0 0 10 12" aria-hidden="true">
                    {t.title.startsWith("Element") && <path d="M3 12L9 0h1v12z" fill="#fff" />}
                    <path d="M3 12L8 .5h2" fill="none" stroke="#555" />
                  </svg>
                )}
              </Tab>
            ))}
          </Tabs>
          <Canvas>
            <VisibleItems>
              Wall Elements Below; Wall Elements Above; Column Elements Below; Column Elements Above; Slab Elements;
            </VisibleItems>
            <StructureModel />
            <Watermark>
              <strong>Activate Windows</strong>
              Go to Settings to activate Windows.
            </Watermark>
            <Badge>QAROURA</Badge>
          </Canvas>
        </Workspace>
      </Main>
      <StatusBar>
        <Grip />
        <StatusText $width={134}>Used: 6030 MB  Available: 10847 M</StatusText>
        <Separator />
        <Grip />
        <StatusLabel>
          Enter start point:
          <PointInput type="text" />
        </StatusLabel>
        <span>(174.6,105.9)</span>
        <Separator />
        <ResizeGrip width="8" height="8" viewBox="0 0 8 8" aria-hidden="true">
          <path d="M5 1h1v1H5zM5 4h1v1H5zM2 4h1v1H2zM5 6h1v1H5zM2 6h1v1H2z" fill="#aaa" />
        </ResizeGrip>
      </StatusBar>
    </Page>
  );
}
